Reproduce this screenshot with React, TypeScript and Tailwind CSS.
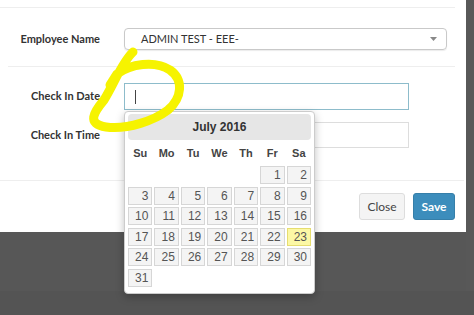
import React from "react";

const rows: (number | null)[][] = [
  [null, null, null, null, null, 1, 2],
  [3, 4, 5, 6, 7, 8, 9],
  [10, 11, 12, 13, 14, 15, 16],
  [17, 18, 19, 20, 21, 22, 23],
  [24, 25, 26, 27, 28, 29, 30],
  [31, null, null, null, null, null, null],
];
const days = ["Su", "Mo", "Tu", "We", "Th", "Fr", "Sa"];

export default function App() {
  return (
    <div
      className="relative w-[474px] h-[315px] overflow-hidden bg-[#575757] flex flex-col"
      style={{ fontFamily: "Lato, 'Open Sans', sans-serif" }}
    >
      <div className="flex h-[291px]">
        <div className="w-[466px] h-[232px] bg-white flex flex-col">
          <div className="h-[8px] border-b border-[#eeeeee] mr-[11px]" />
          <div className="flex items-center mt-[20px] h-[22px]">
            <div className="w-[100px] text-right text-[11px] font-bold text-[#333]">Employee Name</div>
            <div className="ml-[24px] w-[323px] h-[22px] border border-[#c9c9c9] rounded-[4px] shadow-[0_1px_1px_rgba(0,0,0,0.08)] flex items-center pl-[16px] pr-[9px] text-[11px] text-[#333]">
              <span className="flex-1">ADMIN TEST - EEE-</span>
              <svg width="7" height="4" viewBox="0 0 7 4">
                <path d="M0 0 L7 0 L3.5 4 Z" fill="#888" />
              </svg>
            </div>
          </div>
          <div className="mt-[16px] mx-[8px] mr-[11px] border-t border-[#eeeeee]" />
          <div className="flex items-center mt-[16px] h-[27px]">
            <div className="w-[100px] text-right text-[11px] font-bold text-[#333]">Check In Date</div>
            <div className="ml-[24px] w-[285px] h-[27px] border border-[#8dbccb] flex items-center pl-[10px]">
              <div className="w-px h-[14px] bg-[#444]" />
            </div>
          </div>
          <div className="flex items-center mt-[12px] h-[26px]">
            <div className="w-[100px] text-right text-[11px] font-bold text-[#333]">Check In Time</div>
            <div className="ml-[24px] w-[285px] h-[26px] border border-[#dddddd]" />
          </div>
          <div className="mt-[32px] mr-[2px] border-t border-[#eeeeee]" />
          <div className="flex justify-end gap-[8px] mt-[12px] pr-[11px]">
            <div className="w-[46px] h-[27px] rounded-[3px] bg-[#f4f4f4] border border-[#dddddd] flex items-center justify-center text-[12px] text-[#444]">
              Close
            </div>
            <div className="w-[42px] h-[27px] rounded-[3px] bg-[#3c8dbc] border border-[#367fa9] flex items-center justify-center text-[12px] font-bold text-white">
              Save
            </div>
          </div>
        </div>
        <div className="flex-1 bg-[#585858]" />
      </div>
      <div className="flex-1 bg-[#545454]" />

      {/* datepicker */}
      <div
        className="absolute left-[124px] top-[111px] w-[191px] h-[183px] bg-white border border-[#cccccc] rounded-[4px] shadow-[0_3px_8px_rgba(0,0,0,0.25)] px-[3px] pt-[2px]"
        style={{ fontFamily: "'Liberation Sans', Arial, sans-serif" }}
      >
        <div className="h-[26px] bg-[#e6e6e6] rounded-[4px] flex items-center justify-center text-[12px] font-bold text-[#333]">
          July 2016
        </div>
        <div className="grid grid-cols-7 gap-x-[2px] h-[26px] items-center">
          {days.map((d) => (
            <div key={d} className="text-center text-[11px] font-bold text-[#444]">
              {d}
            </div>
          ))}
        </div>
        <div className="grid grid-cols-7 gap-x-[2px] gap-y-[2.6px] w-[183px]">
          {rows.flat().map((n, i) =>
            n === null ? (
              <div key={i} className="h-[18px]" />
            ) : (
              <div
                key={i}
                className={
                  n === 23
                    ? "h-[18px] border border-[#e6dd70] bg-[#fcf8a5] text-right pr-[3px] text-[12px] leading-[16px] text-[#555]"
                    : "h-[18px] border border-[#d6d6d6] bg-[#f4f4f4] text-right pr-[3px] text-[12px] leading-[16px] text-[#555]"
                }
              >
                {n}
              </div>
            )
          )}
        </div>
      </div>

      {/* highlighter */}
      <svg className="absolute left-0 top-0 pointer-events-none" width="474" height="315" viewBox="0 0 474 315">
        <path
          d="M133 52 C122 62, 114 84, 104 100 C94 112, 86 124, 106 127 C128 130, 155 120, 168 110 C182 98, 184 80, 170 70 C155 60, 130 64, 117 74 L110 85"
          fill="none"
          stroke="#f6f300"
          strokeWidth="9"
          strokeLinecap="round"
          strokeLinejoin="round"
        />
      </svg>
    </div>
  );
}
